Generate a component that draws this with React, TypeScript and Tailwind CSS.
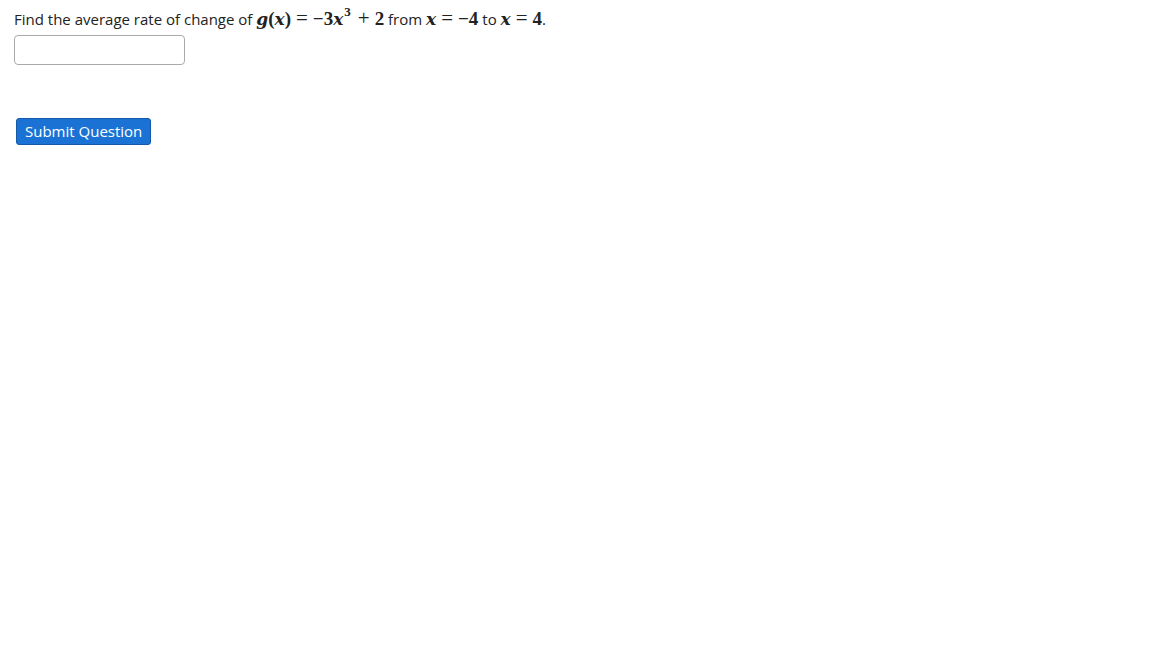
import React from "react";

function M({ children }: { children: React.ReactNode }) {
  return (
    <span className="font-['Liberation_Serif',serif] text-[19px] font-bold">
      {children}
    </span>
  );
}

function V({ children }: { children: React.ReactNode }) {
  return (
    <i className="font-['DejaVu_Serif',serif] text-[17px] font-bold italic">
      {children}
    </i>
  );
}

function Op({ children }: { children: React.ReactNode }) {
  return <span className="mx-[5px] font-normal text-[21px]">{children}</span>;
}

export default function App() {
  return (
    <div className="min-h-screen bg-white px-[14px] pt-[6px] font-['Open_Sans',sans-serif] text-[15px] text-[#222]">
      {/* Question */}
      <p className="leading-[24px]">
        Find the average rate of change of{" "}
        <M>
          <V>g</V>(<V>x</V>)<Op>=</Op>−3<V>x</V>
          <sup className="ml-[1px] mr-[2px] text-[13px] -top-[9px]">3</sup>
          <Op>+</Op>2
        </M>{" "}
        from{" "}
        <M>
          <V>x</V>
          <Op>=</Op>−4
        </M>{" "}
        to{" "}
        <M>
          <V>x</V>
          <Op>=</Op>4
        </M>
        .
      </p>

      {/* Answer */}
      <div className="mt-[4px]">
        <input
          type="text"
          className="h-[30px] w-[171px] rounded-[4px] border border-[#aaa] bg-white px-2 text-[15px] outline-none"
        />
      </div>

      {/* Submit */}
      <div className="mt-[53px] pl-[2px]">
        <button className="h-[27px] rounded-[3px] border border-[#1559a8] bg-[#1a73d4] px-[8px] text-[15px] leading-none text-white">
          Submit Question
        </button>
      </div>
    </div>
  );
}
